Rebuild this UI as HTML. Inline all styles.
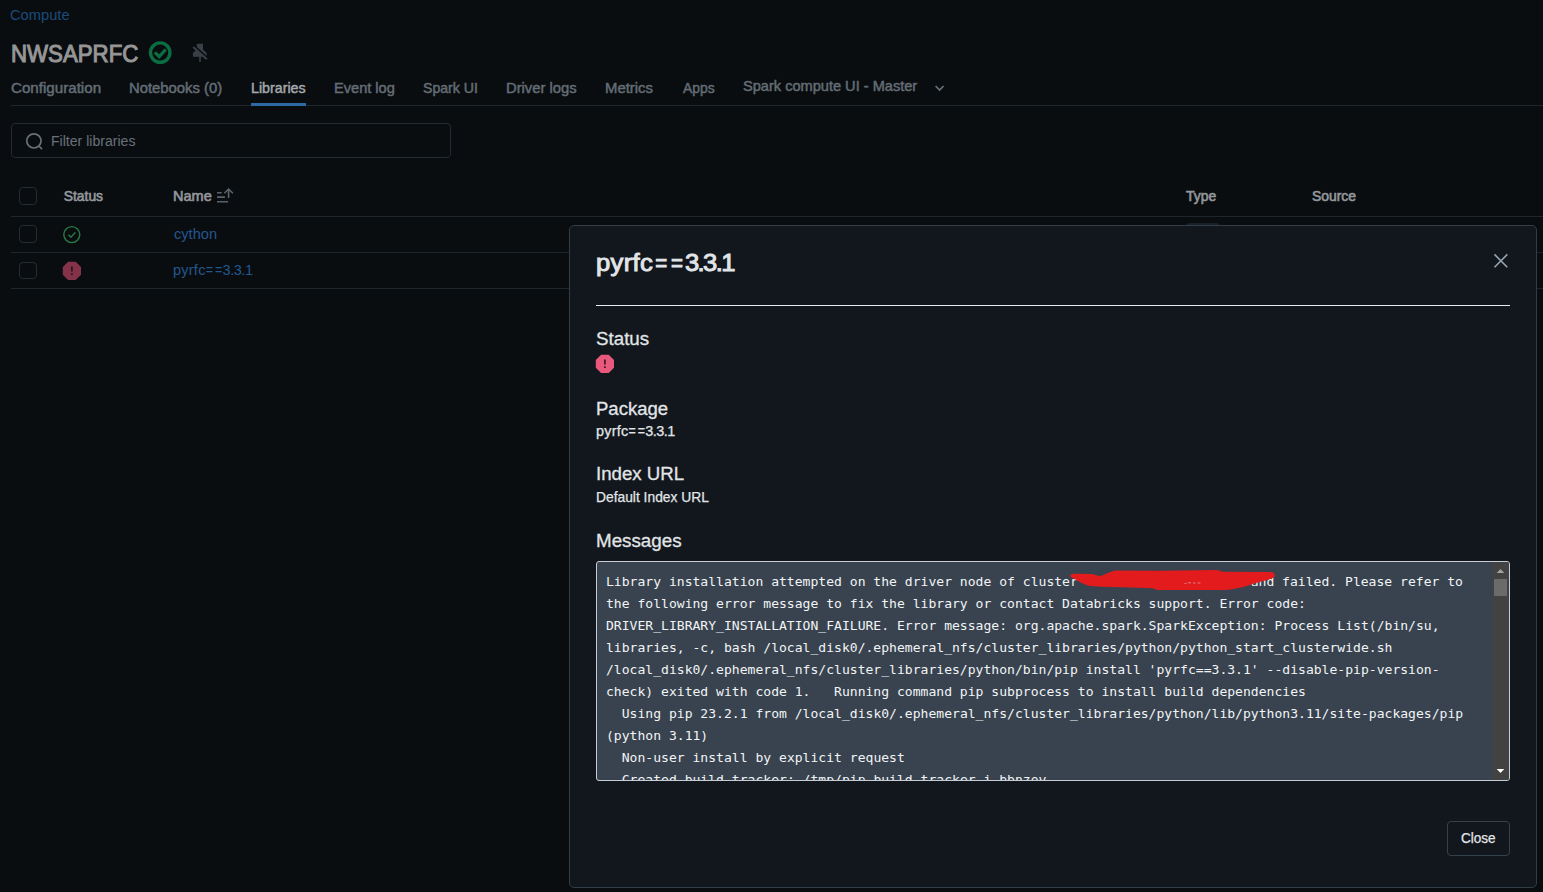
<!DOCTYPE html>
<html lang="en">
<head>
<meta charset="utf-8">
<title>NWSAPRFC - Libraries</title>
<style>
*{box-sizing:border-box;margin:0;padding:0}
html,body{width:1543px;height:892px;overflow:hidden;background:#0a0d10}
body{font-family:"Liberation Sans",sans-serif;font-size:14px;color:#9a9ea2;position:relative}
.abs{position:absolute;white-space:nowrap;line-height:1}
.t{display:inline-block;transform-origin:0 50%;white-space:nowrap}
.eq{display:inline-block;transform:scaleX(.8);margin:0 .02em}
.eq2{display:inline-block;transform:scaleX(.86)}
svg{position:absolute;overflow:visible}
#tabline{position:absolute;left:11px;top:105px;width:1532px;height:1px;background:#1f262c}
#tabactive{position:absolute;left:251px;top:103px;width:55px;height:3px;background:#2d6aa3}
#filter{position:absolute;left:11px;top:123px;width:440px;height:35px;border:1px solid #222a32;border-radius:4px}
.cb{position:absolute;left:19px;width:18px;height:18px;border:1px solid #252c33;border-radius:4px}
.rowline{position:absolute;left:11px;width:1532px;height:1px;background:#1e252b}
#pill{position:absolute;left:1186px;top:223px;width:34px;height:22px;background:#1a2027;border-radius:4px}
#modal{position:absolute;left:569px;top:225px;width:968px;height:663px;background:#11171d;border:1px solid #323d47;border-radius:5px}
#hr{position:absolute;left:596px;top:305px;width:914px;height:1px;background:#e9ebed}
#ta{position:absolute;left:596px;top:561px;width:914px;height:220px;background:#38434f;border:1px solid #c5ccd3;border-radius:3px;overflow:hidden}
#ta pre{position:absolute;left:9px;top:8.5px;width:868px;font-family:"DejaVu Sans Mono","Liberation Mono",monospace;font-size:13.065px;letter-spacing:0.009px;line-height:22px;color:#f2f4f6;white-space:pre-wrap;word-break:normal}
#sbar{position:absolute;right:0;top:0;width:17px;height:218px;background:#424242}
#sthumb{position:absolute;left:2px;top:17px;width:13px;height:17px;background:#6b6b6b}
#close{position:absolute;left:1447px;top:821px;width:63px;height:35px;border:1px solid #35414b;border-radius:4px}
</style>
</head>
<body>
<!-- header icons -->
<svg style="left:148px;top:40px" width="25" height="25" viewBox="0 0 25 25"><circle cx="12.2" cy="12.6" r="9.7" fill="none" stroke="#0b6d42" stroke-width="3.4"/><path d="M6.9 12.4 L11.2 16.7 L17.7 9.5" fill="none" stroke="#0b6d42" stroke-width="3.3"/></svg>
<svg style="left:190px;top:42px" width="20" height="22" viewBox="0 0 20 22"><path d="M6.8 1.8 H13 V7.5 L16.6 11 V14.8 H10.8 V20 H9.2 V14.8 H2.9 V11 L6.8 7.5 Z" fill="#383f46"/><path d="M3.4 3.2 L17.4 16" stroke="#0a0d10" stroke-width="2.2" fill="none"/><path d="M3.2 4.9 L16.8 17.3" stroke="#383f46" stroke-width="2" fill="none"/></svg>
<svg style="left:932px;top:82px" width="14" height="12" viewBox="0 0 14 12"><path d="M3.6 4 L7.6 8 L11.6 4" fill="none" stroke="#6b747c" stroke-width="1.6"/></svg>

<div id="tabline"></div>
<div id="tabactive"></div>

<div id="filter"></div>
<svg style="left:24px;top:131px" width="20" height="20" viewBox="0 0 20 20"><circle cx="9.9" cy="9.9" r="7.1" fill="none" stroke="#68717a" stroke-width="1.7"/><path d="M14.9 15 L18 18.1" stroke="#68717a" stroke-width="1.7" fill="none"/></svg>

<div class="cb" style="top:187px"></div>
<svg style="left:215px;top:186px" width="20" height="18" viewBox="0 0 20 18"><path d="M2 6.7 H6.7 M2 11.1 H10 M2 15.7 H13.1" stroke="#5a636b" stroke-width="1.6" fill="none"/><path d="M13.6 12 V3.2 M9.4 7.2 L13.6 3 L17.9 7.2" stroke="#5a636b" stroke-width="1.6" fill="none"/></svg>
<div class="rowline" style="top:216px"></div>
<div class="cb" style="top:225px"></div>
<svg style="left:62px;top:225px" width="20" height="20" viewBox="0 0 20 20"><circle cx="9.8" cy="9.6" r="8" fill="none" stroke="#2a7a45" stroke-width="1.4"/><path d="M6.4 9.8 L8.9 12.3 L13.4 7.4" fill="none" stroke="#2a7a45" stroke-width="1.4"/></svg>
<div class="rowline" style="top:252px"></div>
<div class="cb" style="top:262px;height:17px"></div>
<svg style="left:62px;top:261px" width="20" height="20" viewBox="0 0 20 20"><path d="M6.1 0.8 H13.7 L19 6.1 V13.7 L13.7 19 H6.1 L0.8 13.7 V6.1 Z" fill="#84324a"/><path d="M9.9 5.6 V10.6 M9.9 12.2 V14" stroke="#1c1418" stroke-width="1.5" fill="none"/></svg>
<div class="rowline" style="top:288px"></div>
<div id="pill"></div>

<div id="modal"></div>
<svg style="left:1493px;top:253px" width="16" height="16" viewBox="0 0 16 16"><path d="M1.5 1.4 L14.3 14.2 M14.3 1.4 L1.5 14.2" stroke="#96a4af" stroke-width="1.6" fill="none"/></svg>
<div id="hr"></div>
<svg style="left:595px;top:354px" width="20" height="20" viewBox="0 0 20 20"><path d="M6.1 0.8 H13.7 L19 6.1 V13.7 L13.7 19 H6.1 L0.8 13.7 V6.1 Z" fill="#e9587d"/><path d="M9.9 5.6 V10.6 M9.9 12.2 V14" stroke="#2a1219" stroke-width="1.5" fill="none"/></svg>

<div id="ta"><pre>Library installation attempted on the driver node of cluster <span id="red" style="display:inline-block;width:20ch;height:1px"></span> and failed. Please refer to the following error message to fix the library or contact Databricks support. Error code: DRIVER_LIBRARY_INSTALLATION_FAILURE. Error message: org.apache.spark.SparkException: Process List(/bin/su, libraries, -c, bash /local_disk0/.ephemeral_nfs/cluster_libraries/python/python_start_clusterwide.sh /local_disk0/.ephemeral_nfs/cluster_libraries/python/bin/pip install 'pyrfc==3.3.1' --disable-pip-version-check) exited with code 1.   Running command pip subprocess to install build dependencies
  Using pip 23.2.1 from /local_disk0/.ephemeral_nfs/cluster_libraries/python/lib/python3.11/site-packages/pip (python 3.11)
  Non-user install by explicit request
  Created build tracker: /tmp/pip-build-tracker-i_bbnzoy
</pre>
<div id="sbar"><div id="sthumb"></div>
<svg style="left:0;top:0" width="17" height="218" viewBox="0 0 17 218"><path d="M4.7 10.9 L8.5 6.9 L12.3 10.9 Z" fill="#a3a3a3"/><path d="M4.7 207 L12.3 207 L8.5 211 Z" fill="#ffffff"/></svg>
</div>
</div>
<svg id="scrib" style="left:0;top:0" width="1543" height="892" viewBox="0 0 1543 892"><path d="M1070.3 575.6 C1070.3 574.3 1073 573.6 1078 573.8 L1092 574.1 C1095 574.3 1098 576.2 1100.3 576 C1104 575.6 1110 571 1117 570.6 L1160 570.8 L1216 570 C1219 570 1221 571.7 1224 571.8 L1270 572.1 C1273.5 572.3 1275 574 1274.8 575.6 C1274.6 577.8 1271.5 578.8 1269 579.4 L1255 583.2 C1251 584.2 1247 586.2 1243.3 587 L1231 589.6 C1228 590 1226 589.9 1224 589.9 L1158 589.9 C1155.5 589.9 1154.5 588.5 1152 588.3 L1131.5 587.6 L1101.7 586.8 L1090 585.9 C1086 585.5 1082 583.2 1078 581 C1074 578.8 1070.3 577.3 1070.3 575.6 Z" fill="#e41b1c"/><path d="M1184.5 583.4 h2 m1.5 -0.6 h3 m2 0.2 h2.5 m2 0 h3" stroke="#d98a8a" stroke-width="0.9" fill="none"/></svg>
<div id="close"></div>

<div class="abs" id="crumb" style="left:10.28px;top:8.35px;font-size:14.0px;font-weight:normal;color:#1b4b7a"><span class="t" style="transform:scaleX(1.0494)">Compute</span></div>
<div class="abs" id="title" style="left:10.67px;top:42.63px;font-size:23.0px;font-weight:normal;-webkit-text-stroke:1.0px #969696;color:#969696"><span class="t" style="transform:scaleX(0.9677)">NWSAPRFC</span></div>
<div class="abs" id="tab1" style="left:10.77px;top:82.43px;font-size:13.9px;font-weight:normal;-webkit-text-stroke:0.45px #646d75;color:#646d75"><span class="t" style="transform:scaleX(1.0899)">Configuration</span></div>
<div class="abs" id="tab2" style="left:128.67px;top:82.43px;font-size:13.9px;font-weight:normal;-webkit-text-stroke:0.45px #646d75;color:#646d75"><span class="t" style="transform:scaleX(1.0685)">Notebooks (0)</span></div>
<div class="abs" id="tab3" style="left:250.89px;top:82.43px;font-size:13.9px;font-weight:normal;-webkit-text-stroke:0.45px #a4a8ac;color:#a4a8ac"><span class="t" style="transform:scaleX(1.0262)">Libraries</span></div>
<div class="abs" id="tab4" style="left:333.87px;top:82.43px;font-size:13.9px;font-weight:normal;-webkit-text-stroke:0.45px #646d75;color:#646d75"><span class="t" style="transform:scaleX(1.0501)">Event log</span></div>
<div class="abs" id="tab5" style="left:422.95px;top:82.43px;font-size:13.9px;font-weight:normal;-webkit-text-stroke:0.45px #646d75;color:#646d75"><span class="t" style="transform:scaleX(1.0164)">Spark UI</span></div>
<div class="abs" id="tab6" style="left:506.13px;top:82.43px;font-size:13.9px;font-weight:normal;-webkit-text-stroke:0.45px #646d75;color:#646d75"><span class="t" style="transform:scaleX(1.0634)">Driver logs</span></div>
<div class="abs" id="tab7" style="left:604.65px;top:82.43px;font-size:13.9px;font-weight:normal;-webkit-text-stroke:0.45px #646d75;color:#646d75"><span class="t" style="transform:scaleX(1.0714)">Metrics</span></div>
<div class="abs" id="tab8" style="left:682.66px;top:82.43px;font-size:13.9px;font-weight:normal;-webkit-text-stroke:0.45px #646d75;color:#646d75"><span class="t" style="transform:scaleX(1.0005)">Apps</span></div>
<div class="abs" id="tab9" style="left:743.04px;top:79.73px;font-size:13.9px;font-weight:normal;-webkit-text-stroke:0.45px #646d75;color:#646d75"><span class="t" style="transform:scaleX(1.0495)">Spark compute UI - Master</span></div>
<div class="abs" id="filt" style="left:51.24px;top:134.05px;font-size:14.0px;font-weight:normal;color:#68717a"><span class="t" style="transform:scaleX(1.0051)">Filter libraries</span></div>
<div class="abs" id="th1" style="left:63.70px;top:189.53px;font-size:13.9px;font-weight:normal;-webkit-text-stroke:0.6px #94989c;color:#94989c"><span class="t" style="transform:scaleX(1.0000)">Status</span></div>
<div class="abs" id="th2" style="left:173.40px;top:189.53px;font-size:13.9px;font-weight:normal;-webkit-text-stroke:0.6px #94989c;color:#94989c"><span class="t" style="transform:scaleX(1.0451)">Name</span></div>
<div class="abs" id="th3" style="left:1186.10px;top:189.53px;font-size:13.9px;font-weight:normal;-webkit-text-stroke:0.6px #94989c;color:#94989c"><span class="t" style="transform:scaleX(1.0000)">Type</span></div>
<div class="abs" id="th4" style="left:1311.94px;top:189.53px;font-size:13.9px;font-weight:normal;-webkit-text-stroke:0.6px #94989c;color:#94989c"><span class="t" style="transform:scaleX(1.0007)">Source</span></div>
<div class="abs" id="l1" style="left:173.54px;top:227.15px;font-size:14.0px;font-weight:normal;color:#22578e"><span class="t" style="transform:scaleX(1.0432)">cython</span></div>
<div class="abs" id="l2" style="left:172.84px;top:263.05px;font-size:14.0px;font-weight:normal;color:#22578e"><span class="t" style="transform:scaleX(1.0369)"><span style="letter-spacing:.016em">pyrfc</span><span class="eq2">=</span><span class="eq2">=</span><span style="letter-spacing:-.033em">3.3.1</span></span></div>
<div class="abs" id="mtitle" style="left:596.40px;top:251.63px;font-size:23.0px;font-weight:normal;-webkit-text-stroke:0.9px #e2e5e8;color:#e2e5e8"><span class="t" style="transform:scaleX(1.1124)"><span style="letter-spacing:.012em">pyrfc</span><span class="eq">=</span><span class="eq">=</span><span style="letter-spacing:-.062em">3.3.1</span></span></div>
<div class="abs" id="h1" style="left:596.04px;top:328.85px;font-size:19.2px;font-weight:normal;-webkit-text-stroke:0.3px #e2e5e8;color:#e2e5e8"><span class="t" style="transform:scaleX(0.9769)">Status</span></div>
<div class="abs" id="h2" style="left:595.94px;top:398.75px;font-size:19.2px;font-weight:normal;-webkit-text-stroke:0.3px #e2e5e8;color:#e2e5e8"><span class="t" style="transform:scaleX(0.9655)">Package</span></div>
<div class="abs" id="v2" style="left:596.44px;top:424.05px;font-size:14.0px;font-weight:normal;-webkit-text-stroke:0.25px #e2e5e8;color:#e2e5e8"><span class="t" style="transform:scaleX(1.0270)"><span style="letter-spacing:.016em">pyrfc</span><span class="eq2">=</span><span class="eq2">=</span><span style="letter-spacing:-.033em">3.3.1</span></span></div>
<div class="abs" id="h3" style="left:596.03px;top:463.65px;font-size:19.2px;font-weight:normal;-webkit-text-stroke:0.3px #e2e5e8;color:#e2e5e8"><span class="t" style="transform:scaleX(0.9729)">Index URL</span></div>
<div class="abs" id="v3" style="left:596.48px;top:490.15px;font-size:14.0px;font-weight:normal;-webkit-text-stroke:0.25px #e2e5e8;color:#e2e5e8"><span class="t" style="transform:scaleX(0.9868)">Default Index URL</span></div>
<div class="abs" id="h4" style="left:596.15px;top:530.95px;font-size:19.2px;font-weight:normal;-webkit-text-stroke:0.3px #e2e5e8;color:#e2e5e8"><span class="t" style="transform:scaleX(0.9789)">Messages</span></div>
<div class="abs" id="closet" style="left:1460.71px;top:831.35px;font-size:14.0px;font-weight:normal;-webkit-text-stroke:0.25px #e2e5e8;color:#e2e5e8"><span class="t" style="transform:scaleX(0.9676)">Close</span></div>
</body>
</html>
